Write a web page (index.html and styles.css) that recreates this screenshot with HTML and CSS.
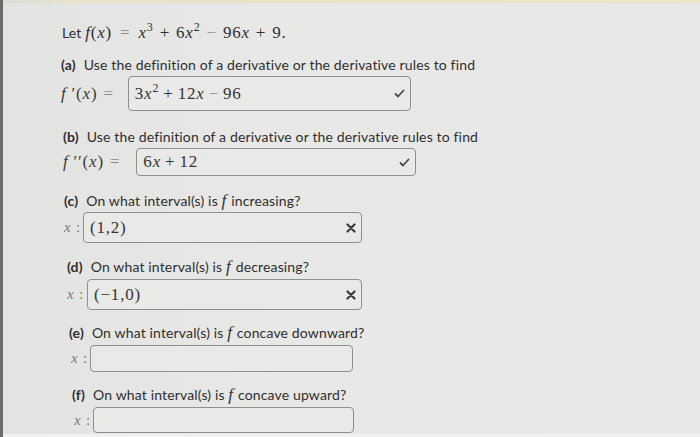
FILE: index.html
```html
<!DOCTYPE html>
<html lang="en">
<head>
<meta charset="utf-8">
<title>Derivative problem</title>
<link rel="stylesheet" href="styles.css">
</head>
<body>
<div class="screen">
  <div class="topstrip"></div>
  <div class="content">
    <p class="intro">Let <span class="m"><i>f</i>(<i>x</i>)<span class="rel">=</span><i>x</i><sup>3</sup><span class="bin">+</span>6<i>x</i><sup>2</sup><span class="bin op">−</span>96<i>x</i><span class="bin">+</span>9.</span></p>

    <section class="q q-a">
      <div class="qtext"><b class="lbl">(a)</b>Use the definition of a derivative or the derivative rules to find</div>
      <div class="ans">
        <span class="pre m"><i>f</i> ′(<i>x</i>)<span class="rel">=</span></span>
        <div class="box box-a"><span class="m val">3<i>x</i><sup>2</sup><span class="bin">+</span>12<i>x</i><span class="bin op">−</span>96</span>
          <svg class="mark" width="11" height="9" viewBox="0 0 11 9"><path d="M1.5 5 L4 7.5 L9.5 1.5" fill="none" stroke="#4a4a4a" stroke-width="1.8" stroke-linecap="round" stroke-linejoin="round"/></svg>
        </div>
      </div>
    </section>

    <section class="q q-b">
      <div class="qtext"><b class="lbl">(b)</b>Use the definition of a derivative or the derivative rules to find</div>
      <div class="ans">
        <span class="pre m"><i>f</i> ′′(<i>x</i>)<span class="rel">=</span></span>
        <div class="box box-b"><span class="m val">6<i>x</i><span class="bin">+</span>12</span>
          <svg class="mark" width="11" height="9" viewBox="0 0 11 9"><path d="M1.5 5 L4 7.5 L9.5 1.5" fill="none" stroke="#4a4a4a" stroke-width="1.8" stroke-linecap="round" stroke-linejoin="round"/></svg>
        </div>
      </div>
    </section>

    <section class="q q-c">
      <div class="qtext"><b class="lbl">(c)</b>On what interval(s) is <i class="mf">f</i> increasing?</div>
      <div class="ans">
        <span class="pre xl m"><i>x</i> :</span>
        <div class="box box-c"><span class="m val">(1,2)</span>
          <svg class="mark" width="10" height="10" viewBox="0 0 10 10"><path d="M1.5 1.5 L8.5 8.5 M8.5 1.5 L1.5 8.5" fill="none" stroke="#3a3a3a" stroke-width="2.2" stroke-linecap="round"/></svg>
        </div>
      </div>
    </section>

    <section class="q q-d">
      <div class="qtext"><b class="lbl">(d)</b>On what interval(s) is <i class="mf">f</i> decreasing?</div>
      <div class="ans">
        <span class="pre xl m"><i>x</i> :</span>
        <div class="box box-d"><span class="m val">(−1,0)</span>
          <svg class="mark" width="10" height="10" viewBox="0 0 10 10"><path d="M1.5 1.5 L8.5 8.5 M8.5 1.5 L1.5 8.5" fill="none" stroke="#3a3a3a" stroke-width="2.2" stroke-linecap="round"/></svg>
        </div>
      </div>
    </section>

    <section class="q q-e">
      <div class="qtext"><b class="lbl">(e)</b>On what interval(s) is <i class="mf">f</i> concave downward?</div>
      <div class="ans">
        <span class="pre xl m"><i>x</i> :</span>
        <div class="box box-e"></div>
      </div>
    </section>

    <section class="q q-f">
      <div class="qtext"><b class="lbl">(f)</b>On what interval(s) is <i class="mf">f</i> concave upward?</div>
      <div class="ans">
        <span class="pre xl m"><i>x</i> :</span>
        <div class="box box-f"></div>
      </div>
    </section>
  </div>
  <div class="bottomstrip"></div>
</div>
</body>
</html>
```

FILE: styles.css
```css
html, body {
  margin: 0;
  padding: 0;
}
body {
  width: 700px;
  height: 437px;
  overflow: hidden;
  background: #e5e5e3;
  font-family: Lato, "Liberation Sans", sans-serif;
  font-size: 14px;
  letter-spacing: 0.15px;
  color: #2f2f2f;
}
.screen {
  position: relative;
  width: 700px;
  height: 437px;
  box-sizing: border-box;
  border-left: 3px solid #6b6b6b;
  background: linear-gradient(90deg, #e3e3e1 0%, #e8e8e6 40%, #e7e7e5 100%);
  display: flex;
  flex-direction: column;
}
.topstrip {
  height: 3px;
  background: linear-gradient(90deg, #dcdcd6 0%, #e6e2c8 10%, #ebe5c6 100%);
  flex: none;
}
.content {
  flex: 1;
  padding-top: 21px;
}
.bottomstrip {
  height: 3px;
  background: #f1f1ef;
  flex: none;
}
.m {
  font-family: "Liberation Serif", "DejaVu Serif", serif;
  font-size: 17px;
  letter-spacing: 0.8px;
}
.m i, i.mf {
  font-family: "Liberation Serif", "DejaVu Serif", serif;
  font-style: italic;
}
i.mf {
  font-size: 17px;
  margin-right: 1px;
}
.m sup {
  font-size: 12px;
  line-height: 0;
  vertical-align: 7px;
}
.bin {
  margin: 0 4px;
}
.rel {
  margin: 0 6px;
  color: #8a8a8a;
}
.op {
  color: #8a8a8a;
}
.intro {
  margin: 0 0 0 59px;
  line-height: 18px;
}
.intro .bin {
  margin: 0 6px;
}
.intro .rel {
  margin: 0 8px;
}
.q {
  display: flex;
  flex-direction: column;
}
.qtext {
  line-height: 18px;
  white-space: nowrap;
}
.lbl {
  font-weight: 700;
  margin-right: 8px;
}
.ans {
  display: flex;
  align-items: center;
}
.pre {
  white-space: nowrap;
  color: #3a3a3a;
}
.pre.xl {
  color: #7a7a7a;
  font-size: 15px;
}
.box {
  box-sizing: border-box;
  border: 1px solid #8f8f8f;
  border-radius: 4px;
  background: #e9e9e7;
  display: flex;
  align-items: center;
  justify-content: space-between;
  padding: 0 5px 0 6px;
}
.val {
  color: #353535;
}
.mark {
  flex: none;
}

.q-a { margin: 14px 0 0 58px; }
.q-a .ans { margin-top: 2px; gap: 8px; }
.box-a { width: 283px; height: 35px; }

.q-b { margin: 17px 0 0 60px; }
.q-b .ans { margin-top: 2px; gap: 10px; }
.box-b { width: 280px; height: 28px; }

.q-c { margin: 16px 0 0 61px; }
.q-c .ans { margin-top: 2px; gap: 2px; }
.box-c { width: 279px; height: 31px; }

.q-d { margin: 15px 0 0 64px; }
.q-d .ans { margin-top: 3px; gap: 3px; }
.box-d { width: 275px; height: 31px; }

.q-e { margin: 14px 0 0 66px; }
.q-e .ans { margin-top: 3px; gap: 2px; }
.q-e .pre { margin-left: 2px; }
.box-e { width: 263px; height: 27px; }

.q-f { margin: 14px 0 0 69px; }
.q-f .ans { margin-top: 3px; gap: 2px; }
.q-f .pre { margin-left: 2px; }
.box-f { width: 261px; height: 26px; }
```
